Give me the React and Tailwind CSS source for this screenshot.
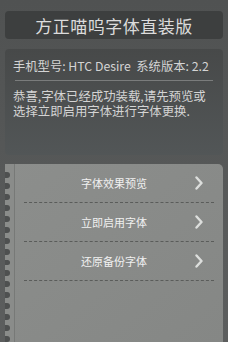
import React from "react";

const items = ["字体效果预览", "立即启用字体", "还原备份字体"];

function Chevron() {
  return (
    <svg width="8" height="14" viewBox="0 0 8 14" className="absolute right-[20px]">
      <path d="M1.5 1.5 L6.5 7 L1.5 12.5" fill="none" stroke="#dcdedc" strokeWidth="2.4" strokeLinecap="round" strokeLinejoin="round" />
    </svg>
  );
}

function Dashes() {
  return <div className="mx-[9px] h-0 border-t border-dashed border-[#5a5c5a]" />;
}

export default function App() {
  return (
    <div
      className="w-[228px] h-[342px] overflow-hidden bg-gradient-to-b from-[#505252] to-[#5c5e5e] px-[5px] pt-[11px] flex flex-col"
      style={{ fontFamily: '"Noto Sans CJK SC", "Noto Sans", sans-serif' }}
    >
      {/* title */}
      <div className="h-[28px] rounded-[4px] bg-[#3d3f3f] flex items-center justify-center text-[17px] leading-none text-[#dcdcdc] tracking-[0.5px]">
        方正喵呜字体直装版
      </div>

      {/* info */}
      <div className="mt-[10px] h-[106px] rounded-[4px] bg-gradient-to-b from-[#474949] to-[#525657] px-[8px] pt-[10px]">
        <div className="text-[12.3px] leading-[14px] text-[#d4d4d4] whitespace-nowrap">
          手机型号: HTC Desire&nbsp; 系统版本: 2.2
        </div>
        <div className="mt-[7px] mx-[2px] h-px bg-[#7a7c7c]" />
        <div className="mt-[8px] text-[12.4px] leading-[15px] text-[#d4d4d4]">
          恭喜,字体已经成功装载,请先预览或选择立即启用字体进行字体更换.
        </div>
      </div>

      {/* menu */}
      <div className="mt-[9px] flex-1 flex rounded-tr-[5px] bg-gradient-to-br from-[#8c8e8c] to-[#858785] overflow-hidden">
        <div className="w-[10px] flex flex-col gap-[5px] pt-[8px] border-r border-[#777977] bg-[#8a8c8a]">
          {Array.from({ length: 16 }).map((_, i) => (
            <div key={i} className="w-[5px] h-[7px] rounded-r-full bg-[#4e5050]" />
          ))}
        </div>
        <div className="flex-1 flex flex-col">
          {items.map((t) => (
            <div key={t}>
              <div className="relative h-[38px] flex items-center justify-center pr-[10px] text-[11px] text-[#f0f0f0]">
                {t}
                <Chevron />
              </div>
              <Dashes />
            </div>
          ))}
        </div>
      </div>
    </div>
  );
}
